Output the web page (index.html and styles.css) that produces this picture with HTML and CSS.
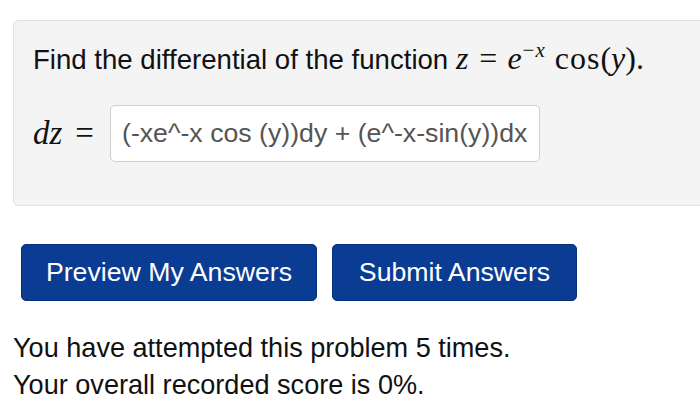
FILE: index.html
```html
<!DOCTYPE html>
<html>
<head>
<meta charset="utf-8">
<link rel="stylesheet" href="styles.css">
</head>
<body>
<div class="panel">
  <p class="question">Find the differential of the function <span class="math"><i>z</i><span class="rel">=</span><i>e</i><sup>−<i>x</i></sup><span class="fn">cos</span>(<i>y</i>).</span></p>
  <div class="answer-row">
    <span class="label math"><i>dz</i><span class="rel">=</span></span>
    <div class="answer-box">(-xe^-x cos (y))dy + (e^-x-sin(y))dx</div>
  </div>
</div>
<div class="buttons">
  <button class="btn btn-preview">Preview My Answers</button>
  <button class="btn btn-submit">Submit Answers</button>
</div>
<div class="status">
  <p>You have attempted this problem 5 times.</p>
  <p>Your overall recorded score is 0%.</p>
</div>
</body>
</html>
```

FILE: styles.css
```css
html, body {
  margin: 0;
  padding: 0;
  background: #ffffff;
  overflow: hidden;
}
body {
  font-family: "Liberation Sans", Arial, sans-serif;
  font-size: 26.7px;
  color: #111;
  width: 700px;
  height: 400px;
}
.panel {
  box-sizing: border-box;
  margin: 20px -20px 0 13px;
  height: 186px;
  background: #f4f4f4;
  border: 1px solid #e2e2e2;
  border-radius: 5px;
  padding: 21px 0 0 19px;
}
.question {
  margin: 0;
  font-size: 27.6px;
  line-height: 33px;
  white-space: nowrap;
}
.math {
  font-family: "Liberation Serif", "DejaVu Serif", serif;
  font-size: 32px;
}
.math i {
  font-style: italic;
}
.math .rel {
  display: inline-block;
  margin: 0 10px 0 11px;
}
.math .fn {
  margin-left: 9px;
  letter-spacing: 1px;
}
.math sup {
  font-size: 21px;
  vertical-align: 12px;
  line-height: 0;
  letter-spacing: 1px;
  margin-left: 1px;
}
.answer-row {
  display: flex;
  align-items: center;
  margin-top: 29px;
}
.label {
  width: 77px;
  flex: 0 0 auto;
  font-size: 33px;
}
.label .rel {
  margin-left: 13px;
}
.answer-box {
  box-sizing: border-box;
  width: 430px;
  height: 57px;
  background: #ffffff;
  border: 1px solid #cfcfcf;
  border-radius: 5px;
  padding-left: 11px;
  display: flex;
  align-items: center;
  color: #555555;
  white-space: nowrap;
}
.buttons {
  display: flex;
  gap: 15px;
  margin: 38px 0 0 21px;
}
.btn {
  box-sizing: border-box;
  height: 57px;
  font-family: "Liberation Sans", Arial, sans-serif;
  font-size: 26.7px;
  color: #ffffff;
  background: #0a3c93;
  border: 1px solid #08307a;
  border-radius: 5px;
  padding: 0;
}
.btn-preview {
  width: 296px;
}
.btn-submit {
  width: 245px;
}
.status {
  margin: 28px 0 0 13px;
  font-size: 27.1px;
}
.status p {
  margin: 0;
  line-height: 37px;
  white-space: nowrap;
}
```
